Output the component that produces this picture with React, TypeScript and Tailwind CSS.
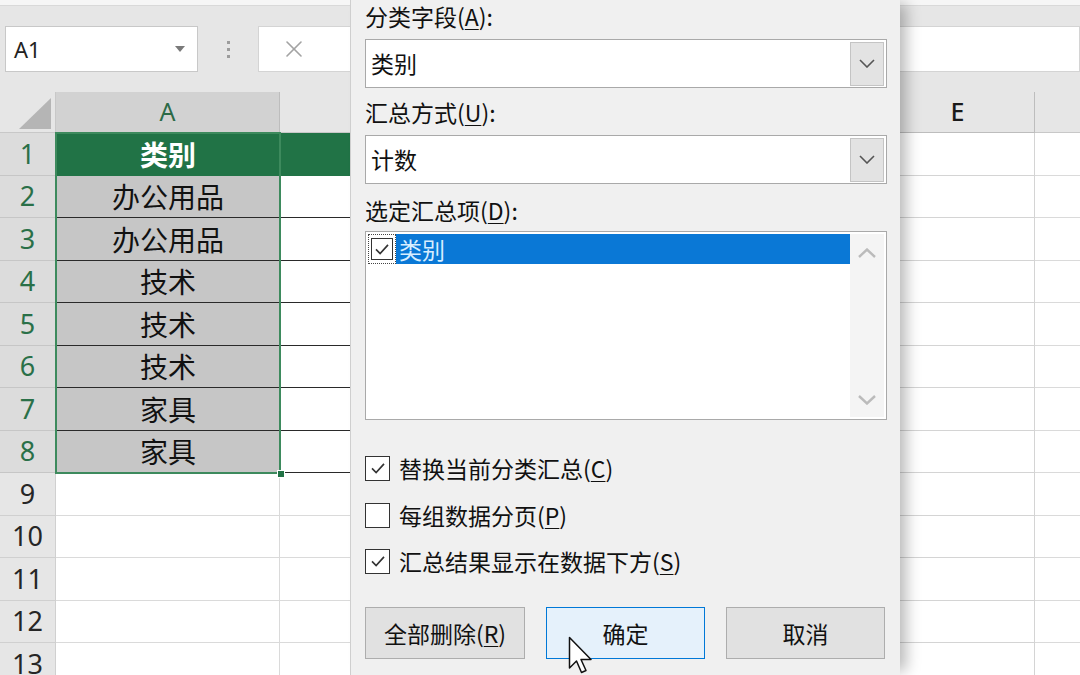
import React from 'react';
import { X } from 'lucide-react';

const rows = [
  { n: 1, a: '类别' },
  { n: 2, a: '办公用品' },
  { n: 3, a: '办公用品' },
  { n: 4, a: '技术' },
  { n: 5, a: '技术' },
  { n: 6, a: '技术' },
  { n: 7, a: '家具' },
  { n: 8, a: '家具' },
  { n: 9, a: '' },
  { n: 10, a: '' },
  { n: 11, a: '' },
  { n: 12, a: '' },
  { n: 13, a: '' },
];

const Check = () => (
  <svg width="18" height="18" viewBox="0 0 24 24" fill="none">
    <path d="M4 12.5 L9.5 18 L20 6.5" stroke="#333" strokeWidth="2.2" />
  </svg>
);

const ChevronDown = ({ color = '#555' }: { color?: string }) => (
  <svg width="16" height="9" viewBox="0 0 16 9" fill="none">
    <path d="M1 1 L8 8 L15 1" stroke={color} strokeWidth="1.6" />
  </svg>
);

const ChevronUp = ({ color = '#bbb' }: { color?: string }) => (
  <svg width="18" height="10" viewBox="0 0 18 10" fill="none">
    <path d="M1 9 L9 1.5 L17 9" stroke={color} strokeWidth="2.4" />
  </svg>
);

const Acc = ({ k }: { k: string }) => (
  <span className="underline decoration-1 underline-offset-[3px]">{k}</span>
);

const Combo = ({ value }: { value: string }) => (
  <div className="h-[49px] w-[522px] bg-white border border-[#a9a9a9] flex items-center justify-between pl-[5px] pr-[2px]">
    <span>{value}</span>
    <div className="w-[34px] h-[44px] bg-[#e3e3e3] border border-[#c4c4c4] flex items-center justify-center">
      <ChevronDown />
    </div>
  </div>
);

const CheckRow = ({ checked, children }: { checked: boolean; children: React.ReactNode }) => (
  <div className="h-[26px] flex items-center gap-[9px]">
    <div className="w-[25px] h-[25px] border border-[#333] bg-white flex items-center justify-center">
      {checked && <Check />}
    </div>
    <span className="leading-[26px]">{children}</span>
  </div>
);

export default function App() {
  return (
    <div className="relative w-[1080px] h-[675px] overflow-hidden bg-white font-['Noto_Sans_CJK_SC',sans-serif]">
      {/* Formula bar */}
      <div className="h-[92px] bg-[#e6e6e6] flex flex-col">
        <div className="h-[6px] bg-[#f6f6f6] border-b border-[#d9d9d9]" />
        <div className="flex items-start pt-[20px]">
          <div className="ml-[5px] w-[193px] h-[46px] bg-white border border-[#c8c8c8] flex items-center justify-between pl-[8px] pr-[12px]">
            <span className="font-['Noto_Sans',sans-serif] text-[22px] text-[#222]">A1</span>
            <svg width="10" height="6" viewBox="0 0 10 6">
              <path d="M0 0 H10 L5 6 Z" fill="#7a7a7a" />
            </svg>
          </div>
          <div className="w-[60px] h-[46px] flex flex-col items-center justify-center gap-[4px]">
            <span className="w-[3px] h-[3px] bg-[#9c9c9c]" />
            <span className="w-[3px] h-[3px] bg-[#9c9c9c]" />
            <span className="w-[3px] h-[3px] bg-[#9c9c9c]" />
          </div>
          <div className="flex-1 h-[46px] bg-white border border-[#d4d4d4] flex items-center pl-[21px]">
            <X size={28} strokeWidth={1.4} color="#a3a3a3" />
          </div>
        </div>
      </div>

      {/* Column headers */}
      <div className="flex h-[41px] bg-[#e6e6e6] font-['Noto_Sans',sans-serif] text-[25px]">
        <div className="w-[56px] border-r border-b border-[#c8c8c8] flex items-end justify-end pr-[4px] pb-[3px]">
          <svg width="32" height="31" viewBox="0 0 32 31">
            <path d="M32 0 V31 H0 Z" fill="#b5b5b5" />
          </svg>
        </div>
        <div className="w-[224px] bg-[#d2d2d2] border-r border-b border-[#bdbdbd] flex items-center justify-center text-[#2c6a46]">A</div>
        <div className="w-[224px] border-r border-b border-[#c8c8c8]" />
        <div className="w-[224px] border-r border-b border-[#c8c8c8]" />
        <div className="w-[153px] border-r border-b border-[#c8c8c8]" />
        <div className="w-[154px] border-r border-b border-[#bdbdbd] flex items-center justify-center text-[#1a1a1a] font-medium">E</div>
        <div className="flex-1 border-b border-[#c8c8c8]" />
      </div>

      {/* Rows */}
      {rows.map((r) => {
        const sel = r.n <= 8;
        const head = r.n === 1;
        const boxed = r.n >= 2 && r.n <= 8;
        return (
          <div key={r.n} className="flex h-[42.5px]">
            <div
              className={
                sel
                  ? 'w-[56px] bg-[#dcdcdc] border-r border-b border-[#c6c6c6] flex items-center justify-center font-[\'Noto_Sans\',sans-serif] text-[27px] text-[#2a7048]'
                  : 'w-[56px] bg-[#e6e6e6] border-r border-b border-[#d0d0d0] flex items-center justify-center font-[\'Noto_Sans\',sans-serif] text-[27px] text-[#262626]'
              }
            >
              {r.n}
            </div>
            <div
              className={
                head
                  ? 'w-[224px] bg-[#217346] flex items-center justify-center text-[28px] font-bold text-white'
                  : boxed
                  ? 'w-[224px] bg-[#c6c6c6] border-b border-[#2a2a2a] flex items-center justify-center text-[28px] text-[#111]'
                  : 'w-[224px] border-r border-b border-[#dadada]'
              }
            >
              {r.a}
            </div>
            <div
              className={
                head
                  ? 'w-[224px] bg-[#217346]'
                  : boxed
                  ? 'w-[224px] border-b border-[#2a2a2a]'
                  : 'w-[224px] border-r border-b border-[#dadada]'
              }
            />
            <div className="w-[224px] border-r border-b border-[#dadada]" />
            <div className="w-[153px] border-r border-b border-[#dadada]" />
            <div className="w-[154px] border-r border-b border-[#d4d4d4]" />
            <div className="flex-1 border-b border-[#dadada]" />
          </div>
        );
      })}

      {/* Selection border + fill handle */}
      <div className="absolute left-[55px] top-[132px] w-[226px] h-[342px] border-2 border-[#3d8a5d]" />
      <div className="absolute left-[277px] top-[470px] w-[8px] h-[8px] bg-[#217346] border border-white" />

      {/* Dialog */}
      <div className="absolute left-[350px] top-0 w-[550px] h-[675px] bg-[#f0f0f0] border-l border-[#cfcfcf] shadow-[10px_0_14px_-4px_rgba(0,0,0,0.28)] pl-[14px] pt-[3px] text-[23px] text-[#111] flex flex-col">
        <div className="h-[26px] leading-[26px]">
          分类字段(<Acc k="A" />):
        </div>
        <div className="mt-[10px]">
          <Combo value="类别" />
        </div>
        <div className="mt-[11px] h-[26px] leading-[26px]">
          汇总方式(<Acc k="U" />):
        </div>
        <div className="mt-[10px]">
          <Combo value="计数" />
        </div>
        <div className="mt-[13px] h-[26px] leading-[26px]">
          选定汇总项(<Acc k="D" />):
        </div>
        <div className="mt-[8px] h-[189px] w-[522px] bg-white border border-[#a9a9a9] flex p-[2px]">
          <div className="flex-1">
            <div className="flex h-[30px]">
              <div className="w-[28px] h-[30px] border border-dotted border-[#444] flex items-center justify-center">
                <div className="w-[22px] h-[22px] border border-[#333] bg-white flex items-center justify-center">
                  <Check />
                </div>
              </div>
              <div className="flex-1 bg-[#0a78d6] text-[#d8eeff] pl-[3px] leading-[30px]">类别</div>
            </div>
          </div>
          <div className="w-[34px] bg-[#f4f4f4] flex flex-col items-center justify-between pt-[14px] pb-[12px]">
            <ChevronUp />
            <div className="rotate-180">
              <ChevronUp />
            </div>
          </div>
        </div>
        <div className="mt-[35px]">
          <CheckRow checked>
            替换当前分类汇总(<Acc k="C" />)
          </CheckRow>
        </div>
        <div className="mt-[21px]">
          <CheckRow checked={false}>
            每组数据分页(<Acc k="P" />)
          </CheckRow>
        </div>
        <div className="mt-[20px]">
          <CheckRow checked>
            汇总结果显示在数据下方(<Acc k="S" />)
          </CheckRow>
        </div>
        <div className="mt-[33px] flex gap-[21px]">
          <div className="w-[160px] h-[52px] bg-[#e1e1e1] border border-[#adadad] flex items-center justify-center">
            全部删除(<Acc k="R" />)
          </div>
          <div className="w-[159px] h-[52px] bg-[#e5f1fb] border border-[#0078d7] flex items-center justify-center">
            确定
          </div>
          <div className="w-[159px] h-[52px] bg-[#e1e1e1] border border-[#adadad] flex items-center justify-center">
            取消
          </div>
        </div>
      </div>

      {/* Mouse cursor */}
      <svg className="absolute left-[568px] top-[636px]" width="26" height="40" viewBox="0 0 26 40">
        <path d="M1.5 1.5 V32 L8.5 25 L13.5 36.5 L18 34.5 L13 23.5 H23 Z" fill="white" stroke="#111" strokeWidth="1.5" strokeLinejoin="round" />
      </svg>
    </div>
  );
}
